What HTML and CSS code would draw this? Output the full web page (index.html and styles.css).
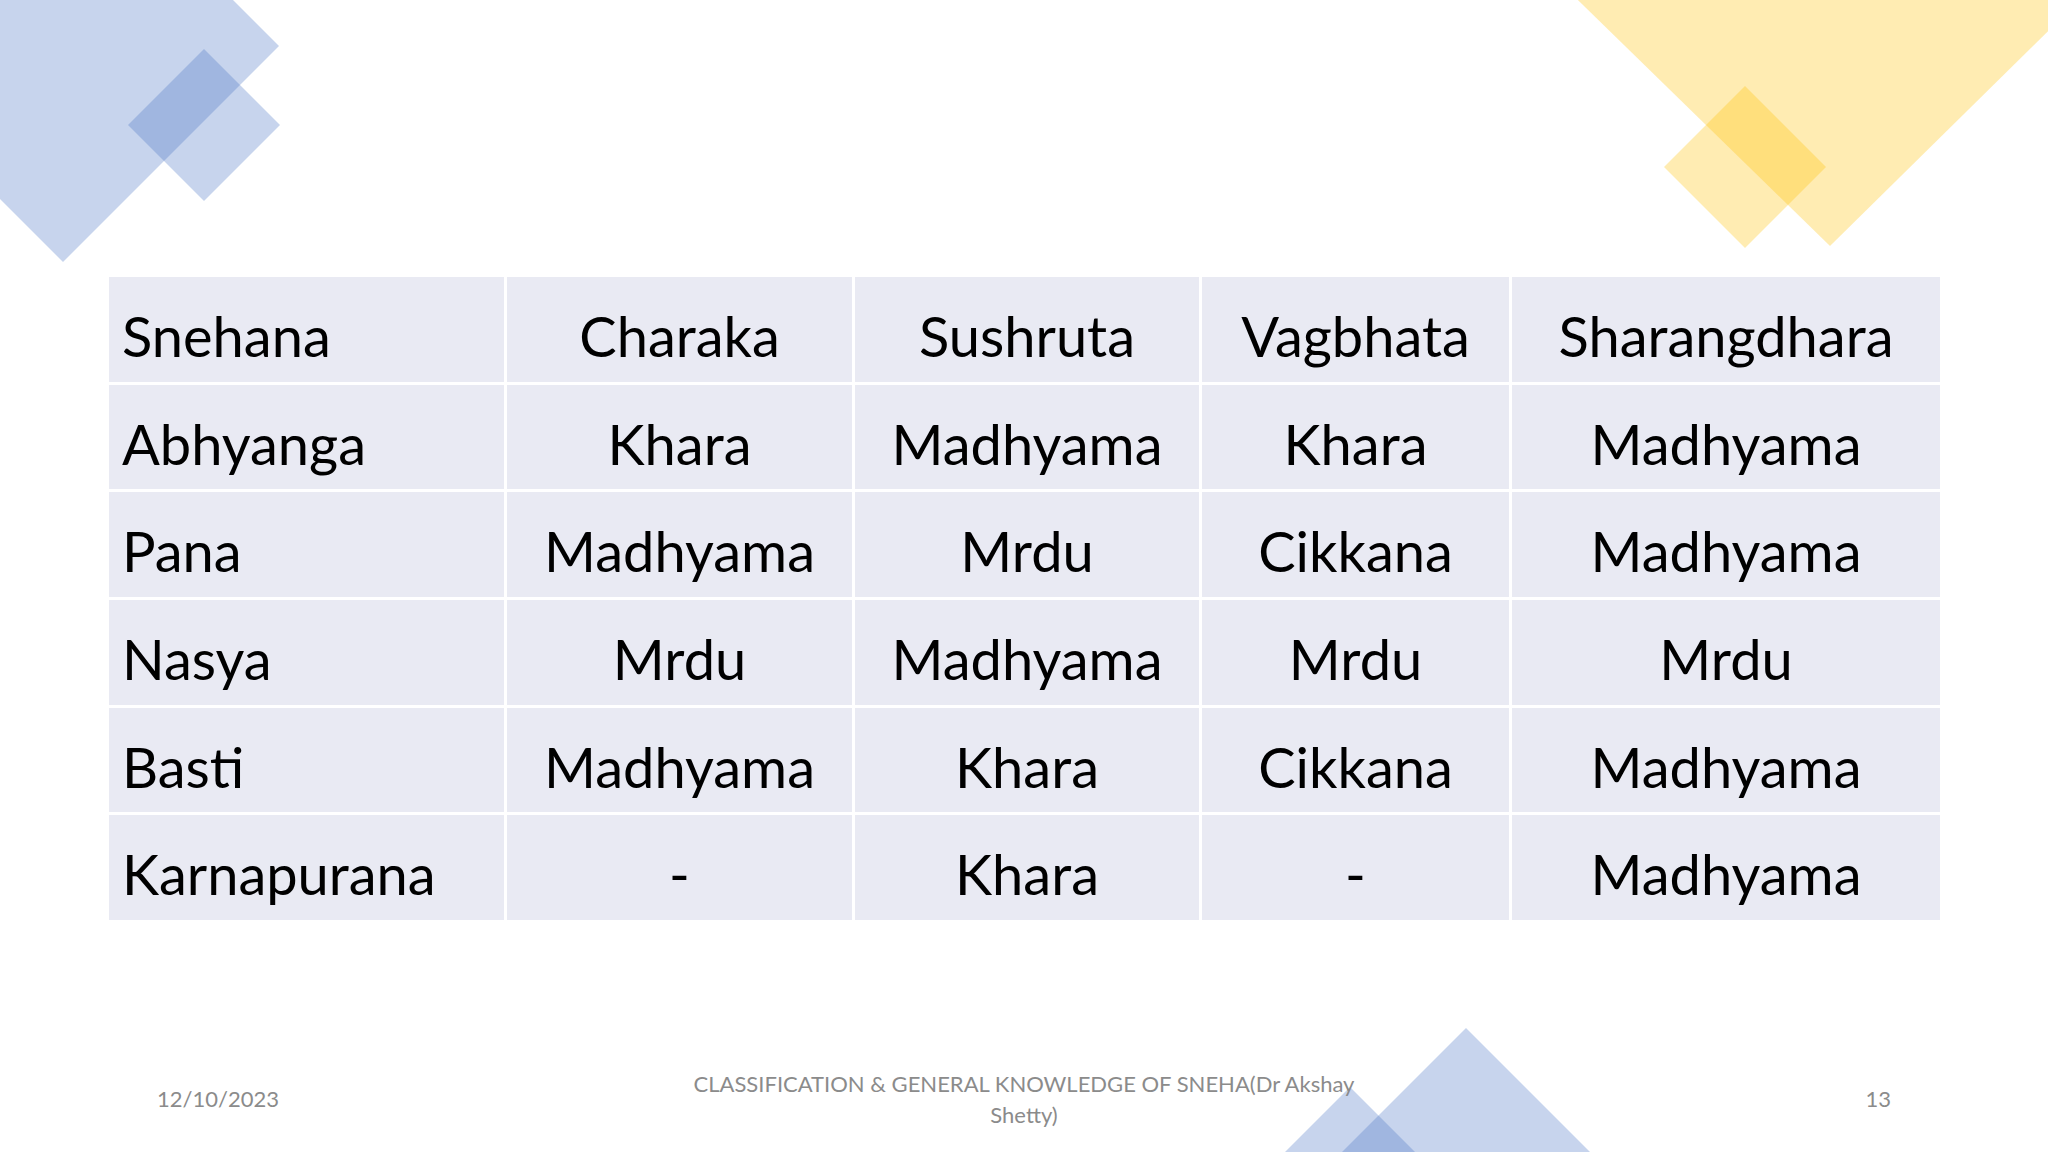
FILE: index.html
```html
<!DOCTYPE html>
<html>
<head>
<meta charset="utf-8">
<link rel="stylesheet" href="styles.css">
</head>
<body>
<div class="slide">
  <svg class="deco" width="2048" height="1152" viewBox="0 0 2048 1152">
    <g fill="#4472c4" fill-opacity="0.3">
      <polygon points="63,-170 279,46 63,262 -153,46"/>
      <polygon points="204,49 280,125 204,201 128,125"/>
      <polygon points="1466,1028 1766,1328 1466,1628 1166,1328"/>
      <polygon points="1350,1087 1550,1287 1350,1487 1150,1287"/>
    </g>
    <g fill="#ffc000" fill-opacity="0.3">
      <polygon points="1830,-560 2236,-154 1830,246 1420,-154"/>
      <polygon points="1745,86 1826,167 1745,248 1664,167"/>
    </g>
  </svg>
  <div class="content">
    <div class="table">
      <div class="cell first">Snehana</div>
      <div class="cell">Charaka</div>
      <div class="cell">Sushruta</div>
      <div class="cell">Vagbhata</div>
      <div class="cell">Sharangdhara</div>

      <div class="cell first">Abhyanga</div>
      <div class="cell">Khara</div>
      <div class="cell">Madhyama</div>
      <div class="cell">Khara</div>
      <div class="cell">Madhyama</div>

      <div class="cell first">Pana</div>
      <div class="cell">Madhyama</div>
      <div class="cell">Mrdu</div>
      <div class="cell">Cikkana</div>
      <div class="cell">Madhyama</div>

      <div class="cell first">Nasya</div>
      <div class="cell">Mrdu</div>
      <div class="cell">Madhyama</div>
      <div class="cell">Mrdu</div>
      <div class="cell">Mrdu</div>

      <div class="cell first">Basti</div>
      <div class="cell">Madhyama</div>
      <div class="cell">Khara</div>
      <div class="cell">Cikkana</div>
      <div class="cell">Madhyama</div>

      <div class="cell first">Karnapurana</div>
      <div class="cell">-</div>
      <div class="cell">Khara</div>
      <div class="cell">-</div>
      <div class="cell">Madhyama</div>
    </div>
    <div class="footer">
      <div class="date">12/10/2023</div>
      <div class="title">CLASSIFICATION &amp; GENERAL KNOWLEDGE OF SNEHA(Dr Akshay<br>Shetty)</div>
      <div class="num">13</div>
    </div>
  </div>
</div>
</body>
</html>
```

FILE: styles.css
```css
html, body {
  margin: 0;
  padding: 0;
  background: #ffffff;
}

body {
  width: 2048px;
  height: 1152px;
  overflow: hidden;
  font-family: "Lato", "Open Sans", sans-serif;
}

.slide {
  position: relative;
  width: 2048px;
  height: 1152px;
  background: #ffffff;
  overflow: hidden;
}

.deco {
  position: absolute;
  left: 0;
  top: 0;
  z-index: 0;
}

.content {
  position: relative;
  z-index: 1;
  display: flex;
  flex-direction: column;
  padding-top: 277px;
}

.table {
  margin-left: 109px;
  width: 1831px;
  display: grid;
  grid-template-columns: 395px 345px 344px 307px 428px;
  grid-template-rows: repeat(6, 104.67px);
  gap: 3px;
}

.cell {
  background: #e9eaf3;
  color: #000000;
  font-size: 56px;
  line-height: 1.2;
  padding-top: 25px;
  text-align: center;
  white-space: nowrap;
  box-sizing: border-box;
}

.cell.first {
  text-align: left;
  padding-left: 13px;
}

.footer {
  margin-top: 148px;
  padding: 0 157px;
  display: grid;
  grid-template-columns: 1fr auto 1fr;
  align-items: center;
  color: #8b8b8b;
  font-size: 22px;
  line-height: 31px;
}

.date {
  text-align: left;
}

.title {
  text-align: center;
}

.num {
  text-align: right;
}
```
